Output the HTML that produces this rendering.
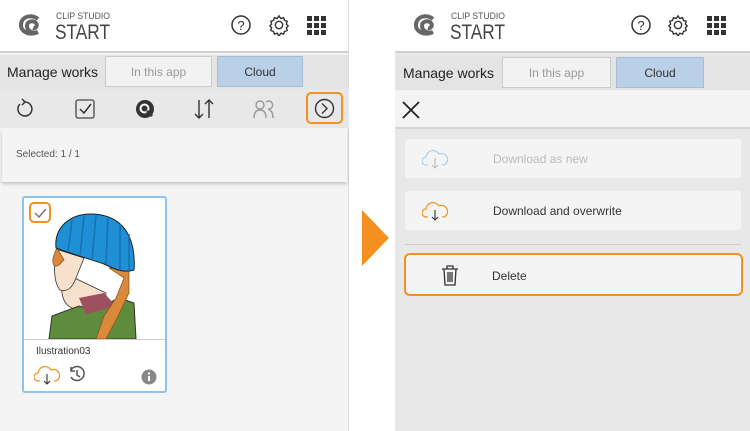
<!DOCTYPE html>
<html><head><meta charset="utf-8"><style>
*{margin:0;padding:0;box-sizing:border-box}
body{width:750px;height:431px;background:#fff;position:relative;overflow:hidden;font-family:"Liberation Sans",sans-serif;color:#333}
.abs{position:absolute}
.panel{position:absolute;top:0;height:431px;background:#f4f4f4}
.hdr{position:absolute;left:0;top:0;width:100%;height:53px;background:#fff;border-bottom:2px solid #cfcfcf}
.logo{position:absolute;left:18px;top:10px}
.bar{position:absolute;left:0;top:55px;width:100%;height:34px;background:#e4e4e4}
.bar .t{position:absolute;left:7px;top:9px;font-size:14px;color:#222}
.tab{position:absolute;top:1px;height:31px;font-size:12px;text-align:center;line-height:30px}
.t1{background:#f2f2f2;border:1px solid #ccc;color:#999}
.t2{background:#b9d0e6;border:1px solid #a4bcd4;color:#333}
.btn{position:absolute;left:10px;width:336px;height:39px;background:#f4f4f4;border-radius:3px;font-size:12px}
.btn span{position:absolute;left:88px;top:13px}
</style></head><body>

<!-- LEFT PANEL -->
<div class="panel" style="left:0;width:349px;border-right:1px solid #ddd">
 <div class="hdr">
  <svg class="logo" width="100" height="32" viewBox="0 0 100 32"><path d="M20 9 C14 4 4 6 3 14 C2 22 12 26 20 22 M20 22 C15 24 9 21 9 16 C9 11 15 10 18 13 C20 15 18 19 15 18" fill="none" stroke="#666" stroke-width="4"/><text x="38" y="9" font-size="9" fill="#555" textLength="54" lengthAdjust="spacingAndGlyphs">CLIP STUDIO</text><text x="37" y="29" font-size="21" fill="#444" textLength="55" lengthAdjust="spacingAndGlyphs">START</text></svg>
  <svg class="abs" style="left:231px;top:15px" width="20" height="20"><circle cx="10" cy="10" r="9" fill="none" stroke="#333" stroke-width="1.5"/><text x="10" y="15" font-size="13" text-anchor="middle" fill="#333">?</text></svg>
  <svg class="abs" style="left:268px;top:14px" width="22" height="22" viewBox="0 0 24 24"><path d="M12 2l2 3 3-1 1 3 3 1-1 3 2 2-2 2 1 3-3 1-1 3-3-1-2 3-2-3-3 1-1-3-3-1 1-3-2-2 2-2-1-3 3-1 1-3 3 1z" fill="none" stroke="#333" stroke-width="1.5"/><circle cx="12" cy="12" r="4" fill="none" stroke="#333" stroke-width="1.5"/></svg>
  <svg class="abs" style="left:307px;top:16px" width="20" height="20"><g fill="#333"><rect x="0" y="0" width="5" height="5"/><rect x="7" y="0" width="5" height="5"/><rect x="14" y="0" width="5" height="5"/><rect x="0" y="7" width="5" height="5"/><rect x="7" y="7" width="5" height="5"/><rect x="14" y="7" width="5" height="5"/><rect x="0" y="14" width="5" height="5"/><rect x="7" y="14" width="5" height="5"/><rect x="14" y="14" width="5" height="5"/></g></svg>
 </div>
 <div class="bar"><div class="t">Manage works</div>
  <div class="tab t1" style="left:105px;width:107px">In this app</div>
  <div class="tab t2" style="left:217px;width:86px">Cloud</div></div>
 <div class="abs" style="left:0;top:89px;width:349px;height:39px;background:#e8e8e8"></div>
 <svg class="abs" style="left:15px;top:98px" width="20" height="22"><path d="M5 6 A7 7 0 1 0 10 4 M10 4 L7 1 M10 4 L7 7" fill="none" stroke="#333" stroke-width="1.5"/></svg>
 <svg class="abs" style="left:75px;top:99px" width="20" height="20"><rect x="1" y="1" width="18" height="18" rx="2" fill="none" stroke="#444" stroke-width="1.3"/><path d="M5 10l4 4 7-9" fill="none" stroke="#333" stroke-width="1.5"/></svg>
 <svg class="abs" style="left:135px;top:99px" width="20" height="20"><circle cx="10" cy="10" r="9" fill="#333"/><circle cx="9.5" cy="9.5" r="5" fill="#fff"/><circle cx="9.5" cy="9.5" r="3" fill="#333"/><path d="M12 12l5 5" stroke="#333" stroke-width="3"/></svg>
 <svg class="abs" style="left:193px;top:98px" width="22" height="22"><path d="M6 2v18M2 16l4 4 4-4M16 20V2M12 6l4-4 4 4" fill="none" stroke="#333" stroke-width="1.4"/></svg>
 <svg class="abs" style="left:253px;top:99px" width="22" height="20"><circle cx="7" cy="6" r="4" fill="none" stroke="#999" stroke-width="1.4"/><path d="M1 19c0-5 2-8 6-8s6 3 6 8" fill="none" stroke="#999" stroke-width="1.4"/><path d="M13 3a4 4 0 1 1 2 7c3 1 5 4 5 9" fill="none" stroke="#999" stroke-width="1.4"/></svg>
 <div class="abs" style="left:306px;top:92px;width:37px;height:32px;border:2.5px solid #f39020;border-radius:5px"></div>
 <svg class="abs" style="left:314px;top:98px" width="21" height="21"><circle cx="10.5" cy="10.5" r="9" fill="none" stroke="#333" stroke-width="1.4"/><path d="M8 5.5l5 5-5 5" fill="none" stroke="#333" stroke-width="1.4"/></svg>
 <div class="abs" style="left:2px;top:128px;width:345px;height:54px;background:#f4f4f4;box-shadow:0 2px 3px rgba(0,0,0,.2)"><div class="abs" style="left:14px;top:21px;font-size:10px;color:#555">Selected: 1 / 1</div></div>
 <!-- card -->
 <div class="abs" style="left:22px;top:196px;width:145px;height:197px;background:#fff;border:2px solid #8cc4ee;border-radius:3px">
  <svg class="abs" style="left:0;top:0" width="141" height="141" viewBox="0 0 141 141">
   <path d="M40 75 C35 95 38 110 55 112 L60 125 L80 120 L82 95 Z" fill="#f7e0cc" stroke="#333" stroke-width="0.8"/>
   <path d="M25 141 L28 118 L55 108 L70 112 L95 100 L110 105 L112 141 Z" fill="#5e8c3c" stroke="#333" stroke-width="1"/>
   <path d="M55 100 L80 95 L92 108 L62 116 Z" fill="#9c5060"/>
   <path d="M35 52 C28 65 30 85 36 92 C44 94 48 90 52 80 L60 60 Z" fill="#f7e0cc" stroke="#333" stroke-width="0.8"/>
   <path d="M33 50 C25 65 30 72 36 66 L40 62 Z M85 70 L100 80 L92 100 L80 118 L72 141 L82 141 L94 118 L105 95 L105 72 Z" fill="#d88a3a" stroke="#8a4a1a" stroke-width="0.7"/>
   <path d="M32 50 C30 30 45 15 70 16 C100 18 112 40 110 72 C100 75 92 72 80 66 C62 60 45 55 32 50 Z" fill="#1f8fd6" stroke="#222" stroke-width="1"/>
   <path d="M48 22 L44 54 M60 18 L56 58 M72 17 L68 62 M84 19 L82 66 M96 26 L96 72 M105 36 L105 73" stroke="#1a6fae" stroke-width="1.5"/>
  </svg>
  <div class="abs" style="left:0;top:141px;width:141px;height:1px;background:#ccc"></div>
  <div class="abs" style="left:5px;top:4px;width:22px;height:21px;border:2.5px solid #f39020;border-radius:5px;background:#fff"></div>
  <svg class="abs" style="left:9px;top:9px" width="14" height="12"><path d="M2 6l4 4 7-8" fill="none" stroke="#777" stroke-width="1.5"/></svg>
  <div class="abs" style="left:12px;top:148px;font-size:10px;color:#333">Ilustration03</div>
  <svg class="abs" style="left:10px;top:167px" width="26" height="20"><path d="M6 16H4a4 4 0 0 1 0-8 7 7 0 0 1 13-3 5 5 0 0 1 5 11h-2" fill="none" stroke="#f39020" stroke-width="1.2"/><path d="M13 9v10M10 16l3 3 3-3" fill="none" stroke="#333" stroke-width="1.1"/></svg>
  <svg class="abs" style="left:44px;top:167px" width="18" height="18"><path d="M3 5A7 7 0 1 1 3 12M3 2v4h4M9 5v5l3 2" fill="none" stroke="#555" stroke-width="1.5"/></svg>
  <svg class="abs" style="left:117px;top:171px" width="16" height="16"><circle cx="8" cy="8" r="7.5" fill="#888"/><rect x="7" y="7" width="2" height="5" fill="#fff"/><circle cx="8" cy="4.5" r="1.2" fill="#fff"/></svg>
 </div>
</div>

<!-- arrow -->
<svg class="abs" style="left:362px;top:210px" width="28" height="56"><path d="M0 0L27 28L0 56Z" fill="#f39020"/></svg>

<!-- RIGHT PANEL -->
<div class="panel" style="left:395px;width:355px;background:#e8e8e8">
 <div class="hdr">
  <svg class="logo" width="100" height="32" viewBox="0 0 100 32"><path d="M20 9 C14 4 4 6 3 14 C2 22 12 26 20 22 M20 22 C15 24 9 21 9 16 C9 11 15 10 18 13 C20 15 18 19 15 18" fill="none" stroke="#666" stroke-width="4"/><text x="38" y="9" font-size="9" fill="#555" textLength="54" lengthAdjust="spacingAndGlyphs">CLIP STUDIO</text><text x="37" y="29" font-size="21" fill="#444" textLength="55" lengthAdjust="spacingAndGlyphs">START</text></svg>
  <svg class="abs" style="left:236px;top:15px" width="20" height="20"><circle cx="10" cy="10" r="9" fill="none" stroke="#333" stroke-width="1.5"/><text x="10" y="15" font-size="13" text-anchor="middle" fill="#333">?</text></svg>
  <svg class="abs" style="left:272px;top:14px" width="22" height="22" viewBox="0 0 24 24"><path d="M12 2l2 3 3-1 1 3 3 1-1 3 2 2-2 2 1 3-3 1-1 3-3-1-2 3-2-3-3 1-1-3-3-1 1-3-2-2 2-2-1-3 3-1 1-3 3 1z" fill="none" stroke="#333" stroke-width="1.5"/><circle cx="12" cy="12" r="4" fill="none" stroke="#333" stroke-width="1.5"/></svg>
  <svg class="abs" style="left:312px;top:16px" width="20" height="20"><g fill="#333"><rect x="0" y="0" width="5" height="5"/><rect x="7" y="0" width="5" height="5"/><rect x="14" y="0" width="5" height="5"/><rect x="0" y="7" width="5" height="5"/><rect x="7" y="7" width="5" height="5"/><rect x="14" y="7" width="5" height="5"/><rect x="0" y="14" width="5" height="5"/><rect x="7" y="14" width="5" height="5"/><rect x="14" y="14" width="5" height="5"/></g></svg>
 </div>
 <div class="bar" style="height:35px"><div class="t" style="left:8px;top:10px">Manage works</div>
  <div class="tab t1" style="left:107px;width:109px;top:2px">In this app</div>
  <div class="tab t2" style="left:221px;width:88px;top:2px">Cloud</div></div>
 <div class="abs" style="left:0;top:90px;width:355px;height:39px;background:#f4f4f4;border-bottom:2px solid #d4d4d4"></div>
 <svg class="abs" style="left:7px;top:101px" width="18" height="18"><path d="M1 1l16 16M17 1L1 17" stroke="#222" stroke-width="1.8"/></svg>
 <div class="btn" style="top:139px;color:#bbb"><svg class="abs" style="left:17px;top:10px" width="26" height="20"><path d="M6 16H4a4 4 0 0 1 0-8 7 7 0 0 1 13-3 5 5 0 0 1 5 11h-2" fill="none" stroke="#a8cbe8" stroke-width="1.1"/><path d="M13 9v10M10 16l3 3 3-3" fill="none" stroke="#bbb" stroke-width="1.1"/></svg><span>Download as new</span></div>
 <div class="btn" style="top:191px;color:#333"><svg class="abs" style="left:17px;top:10px" width="26" height="20"><path d="M6 16H4a4 4 0 0 1 0-8 7 7 0 0 1 13-3 5 5 0 0 1 5 11h-2" fill="none" stroke="#f39020" stroke-width="1.2"/><path d="M13 9v10M10 16l3 3 3-3" fill="none" stroke="#333" stroke-width="1.1"/></svg><span>Download and overwrite</span></div>
 <div class="abs" style="left:10px;top:244px;width:336px;height:1px;background:#ccc"></div>
 <div class="btn" style="left:9px;top:253px;width:339px;height:43px;border:2.5px solid #f39020;border-radius:6px;color:#333"><svg class="abs" style="left:35px;top:10px" width="18" height="22"><path d="M1 4h16M6 4V1h6v3M3 4l1 16h10l1-16M7 7v10M9 7v10M11 7v10" fill="none" stroke="#333" stroke-width="1.3"/></svg><span style="left:86px;top:14px">Delete</span></div>
</div>
</body></html>
